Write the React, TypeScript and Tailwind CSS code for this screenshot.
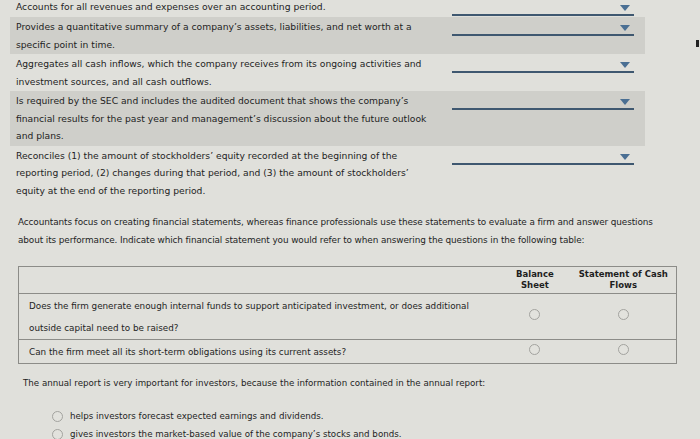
import React from "react";

const rows: { text: string[]; shaded: boolean }[] = [
  { text: ["Accounts for all revenues and expenses over an accounting period."], shaded: false },
  {
    text: [
      "Provides a quantitative summary of a company\u2019s assets, liabilities, and net worth at a",
      "specific point in time.",
    ],
    shaded: true,
  },
  {
    text: [
      "Aggregates all cash inflows, which the company receives from its ongoing activities and",
      "investment sources, and all cash outflows.",
    ],
    shaded: false,
  },
  {
    text: [
      "Is required by the SEC and includes the audited document that shows the company\u2019s",
      "financial results for the past year and management\u2019s discussion about the future outlook",
      "and plans.",
    ],
    shaded: true,
  },
  {
    text: [
      "Reconciles (1) the amount of stockholders\u2019 equity recorded at the beginning of the",
      "reporting period, (2) changes during that period, and (3) the amount of stockholders\u2019",
      "equity at the end of the reporting period.",
    ],
    shaded: false,
  },
];

function Dropdown() {
  return (
    <div className="relative ml-[12px] h-[18px] w-[182px] border-b-2 border-[#3f5870]">
      <svg
        className="absolute right-[4px] top-[7px]"
        width="10"
        height="7"
        viewBox="0 0 10 7"
      >
        <polygon points="0,0 10,0 5,6" fill="#4a6f93" />
      </svg>
    </div>
  );
}

function Radio() {
  return (
    <span className="inline-block h-[11px] w-[11px] rounded-full border border-[#a3a39f] bg-[#e2e2dd]" />
  );
}

export default function App() {
  return (
    <div className="relative h-[439px] w-[700px] overflow-hidden bg-[#e0e0db] font-['DejaVu_Sans',Verdana,sans-serif] text-[9px] text-[#1e1e1e]">
      <div className="ml-[10px] mt-[-3px] w-[635px] text-[9.2px]">
        {rows.map((r, i) => (
          <div
            key={i}
            className={`flex py-[1px] pl-[6px] ${r.shaded ? "bg-[#cfcfca]" : ""}`}
          >
            <div className="w-[424px] leading-[17.5px]">
              {r.text.map((t, j) => (
                <div key={j} className="whitespace-nowrap">
                  {t}
                </div>
              ))}
            </div>
            <Dropdown />
          </div>
        ))}
      </div>

      <div className="absolute right-[1px] top-[40px] h-[7px] w-[3px] bg-[#222]" />

      <div className="ml-[18px] mt-[13px] text-[8.9px] leading-[18px] tracking-[-0.1px]">
        <div className="whitespace-nowrap">
          Accountants focus on creating financial statements, whereas finance professionals use these statements to evaluate a firm and answer questions
        </div>
        <div className="whitespace-nowrap">
          about its performance. Indicate which financial statement you would refer to when answering the questions in the following table:
        </div>
      </div>

      <table className="ml-[18px] mt-[17px] w-[659px] border-collapse border border-[#8c8c88] text-[8.8px]">
        <thead>
          <tr className="h-[27px] border-b border-[#8c8c88]">
            <th className="w-[475px]" />
            <th className="w-[84px] text-center align-middle text-[8.5px] font-bold leading-[11px]">
              Balance
              <br />
              Sheet
            </th>
            <th className="w-[100px] whitespace-nowrap pr-[6px] text-center align-middle text-[8.5px] font-bold leading-[11px]">
              Statement of Cash
              <br />
              Flows
            </th>
          </tr>
        </thead>
        <tbody>
          <tr className="h-[44px] border-b border-[#8c8c88]">
            <td className="pl-[10px] pt-[1px] align-middle leading-[22px]">
              <div className="whitespace-nowrap">
                Does the firm generate enough internal funds to support anticipated investment, or does additional
              </div>
              <div className="whitespace-nowrap">outside capital need to be raised?</div>
            </td>
            <td className="text-center align-middle">
              <Radio />
            </td>
            <td className="pr-[6px] text-center align-middle">
              <Radio />
            </td>
          </tr>
          <tr className="h-[24px]">
            <td className="pl-[10px] align-middle leading-[18px]">
              <div className="whitespace-nowrap">
                Can the firm meet all its short-term obligations using its current assets?
              </div>
            </td>
            <td className="text-center align-middle">
              <Radio />
            </td>
            <td className="pr-[6px] text-center align-middle">
              <Radio />
            </td>
          </tr>
        </tbody>
      </table>

      <div className="ml-[23px] mt-[10px] whitespace-nowrap text-[8.7px] leading-[18px]">
        The annual report is very important for investors, because the information contained in the annual report:
      </div>

      <div className="ml-[52px] mt-[15px] flex items-center gap-[7px] text-[8.7px] leading-[18px]">
        <Radio />
        <span className="whitespace-nowrap">helps investors forecast expected earnings and dividends.</span>
      </div>
      <div className="ml-[52px] mt-[0px] flex items-center gap-[7px] text-[8.7px] leading-[18px]">
        <Radio />
        <span className="whitespace-nowrap">
          gives investors the market-based value of the company&rsquo;s stocks and bonds.
        </span>
      </div>
    </div>
  );
}
